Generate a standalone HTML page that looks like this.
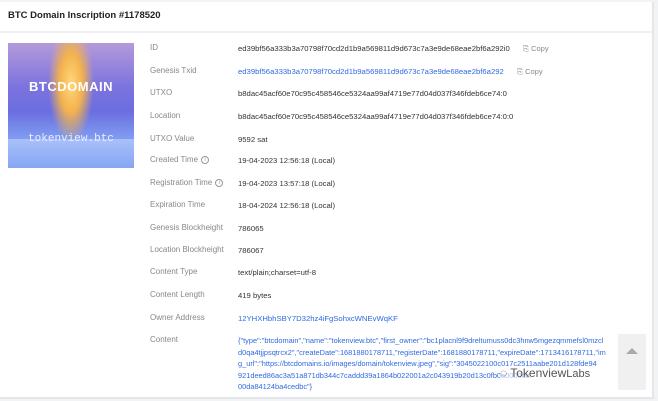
<!DOCTYPE html>
<html><head><meta charset="utf-8"><style>
body{margin:0;width:658px;height:401px;background:#f2f3f5;font-family:"Liberation Sans",sans-serif;position:relative;overflow:hidden}
.card{position:absolute;left:0;top:2px;width:652px;height:395px;background:#fff;border-right:2px solid #e4e6ea;border-bottom:2px solid #e4e6ea}
.hdr{position:absolute;left:8px;top:8px;font-size:9.5px;font-weight:bold;color:#222}
.sep{position:absolute;left:0;right:0;top:29px;height:2px;background:#eef0f3}
.img{position:absolute;left:8px;top:43px;width:126px;height:125px;overflow:hidden;background:linear-gradient(180deg,#b49ada 0%,#7c73de 35%,#6b6ee0 55%,#7f9af0 75%,#8ab0f6 100%)}
.l{position:absolute;left:150px;font-size:8px;color:#888}
.v{position:absolute;left:238px;font-size:7.7px;color:#333}
.b{color:#2f6ae0}
.cp{position:absolute;font-size:7.5px;color:#888}
.i{display:inline-block;width:6px;height:6px;border:1px solid #999;border-radius:50%;font-size:5px;line-height:6px;text-align:center;margin-left:3px;vertical-align:middle}
</style></head><body>
<div class="card">
<div class="hdr">BTC Domain Inscription #1178520</div>
<div class="sep"></div>
</div>
<div class="img">
<div style="position:absolute;left:40px;top:0;width:46px;height:100px;background:radial-gradient(ellipse at 50% 40%,#ffd77a 0%,#f3b24e 35%,rgba(240,170,90,0) 70%)"></div>
<div style="position:absolute;left:0;top:96px;width:126px;height:29px;background:linear-gradient(180deg,#a9c0fa,#86a6f3)"></div>
<div style="position:absolute;left:0;top:36px;width:126px;text-align:center;color:#fff;font-weight:bold;font-size:13px;letter-spacing:0.5px">BTCDOMAIN</div>
<div style="position:absolute;left:0;top:90px;width:126px;text-align:center;color:#eef;font-family:'Liberation Mono',monospace;font-size:11px">tokenview.btc</div>
</div>
<div class="l" style="top:43px">ID</div><div class="v" style="top:44px">ed39bf56a333b3a70798f70cd2d1b9a569811d9d673c7a3e9de68eae2bf6a292i0</div>
<div class="cp" style="left:523px;top:44px">⎘ Copy</div>
<div class="l" style="top:66px">Genesis Txid</div><div class="v b" style="top:67px">ed39bf56a333b3a70798f70cd2d1b9a569811d9d673c7a3e9de68eae2bf6a292</div>
<div class="cp" style="left:517px;top:67px">⎘ Copy</div>
<div class="l" style="top:88px">UTXO</div><div class="v" style="top:89px">b8dac45acf60e70c95c458546ce5324aa99af4719e77d04d037f346fdeb6ce74:0</div>
<div class="l" style="top:111px">Location</div><div class="v" style="top:112px">b8dac45acf60e70c95c458546ce5324aa99af4719e77d04d037f346fdeb6ce74:0:0</div>
<div class="l" style="top:134px">UTXO Value</div><div class="v" style="top:135px">9592 sat</div>
<div class="l" style="top:155px">Created Time<span class="i">i</span></div><div class="v" style="top:156px">19-04-2023 12:56:18 (Local)</div>
<div class="l" style="top:178px">Registration Time<span class="i">i</span></div><div class="v" style="top:179px">19-04-2023 13:57:18 (Local)</div>
<div class="l" style="top:200px">Expiration Time</div><div class="v" style="top:201px">18-04-2024 12:56:18 (Local)</div>
<div class="l" style="top:223px">Genesis Blockheight</div><div class="v" style="top:224px">786065</div>
<div class="l" style="top:245px">Location Blockheight</div><div class="v" style="top:246px">786067</div>
<div class="l" style="top:267px">Content Type</div><div class="v" style="top:268px">text/plain;charset=utf-8</div>
<div class="l" style="top:290px">Content Length</div><div class="v" style="top:291px">419 bytes</div>
<div class="l" style="top:313px">Owner Address</div><div class="v b" style="top:314px">12YHXHbhSBY7D32hz4iFgSohxcWNEvWqKF</div>
<div class="l" style="top:335px">Content</div>
<div class="v b" style="top:335px;line-height:11.6px;white-space:nowrap;font-size:7.4px">{"type":"btcdomain","name":"tokenview.btc","first_owner":"bc1placnl9f9dreltumuss0dc3hnw5mgezqmmefsl0mzcl<br>d0qa4tjjpsqtrcx2","createDate":1681880178711,"registerDate":1681880178711,"expireDate":1713416178711,"im<br>g_url":"https://btcdomains.io/images/domain/tokenview.jpeg","sig":"3045022100c017c2511aabe201d128fde94<br>921deed86ac3a51a871db344c7caddd39a1864b022001a2c043919b20d13c0fb0a0000da<br>00da84124ba4cedbc"}</div>
<div style="position:absolute;left:618px;top:334px;width:28px;height:56px;background:#f0f0f0"><div style="position:absolute;left:8px;top:14px;border-left:6px solid transparent;border-right:6px solid transparent;border-bottom:6px solid #aaa"></div></div>
<div style="position:absolute;left:500px;top:366px;font-size:12px;color:#555;background:rgba(255,255,255,0.6)">◌ Tokenview<span style="font-size:11px">Labs</span></div>
</body></html>
